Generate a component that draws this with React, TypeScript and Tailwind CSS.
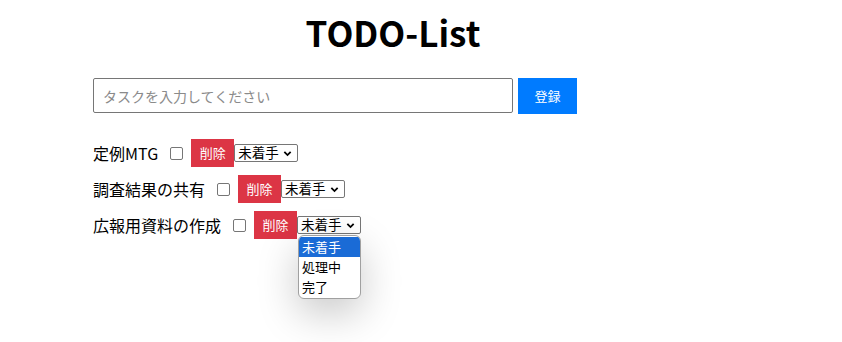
import { useState } from 'react'

type Todo = { id: number; title: string; status: string; done: boolean }

const initialTodos: Todo[] = [
  { id: 1, title: '定例MTG', status: '未着手', done: false },
  { id: 2, title: '調査結果の共有', status: '未着手', done: false },
  { id: 3, title: '広報用資料の作成', status: '未着手', done: false },
]

const statuses = ['未着手', '処理中', '完了']

function StatusSelect({ value, open }: { value: string; open?: boolean }) {
  return (
    <div className="relative">
      <div className="flex h-[18px] items-center gap-[4px] rounded-[2px] border border-[#767676] bg-white pl-[3px] pr-[5px] text-[13.5px] leading-none text-black">
        <span>{value}</span>
        <svg width="9" height="9" viewBox="0 0 10 10" fill="none">
          <path d="M1.5 3.2 5 6.7 8.5 3.2" stroke="#000" strokeWidth="2" />
        </svg>
      </div>
      {open && (
        <div className="absolute left-[1px] top-[19px] z-10 w-[63px] overflow-hidden rounded-[6px] border border-[#a0a0a0] bg-white py-[1px] text-[13px] shadow-[0_14px_40px_rgba(0,0,0,0.22)]">
          {statuses.map((s, i) => (
            <div
              key={s}
              className={
                i === 0
                  ? 'h-[20px] bg-[#1a6bd6] pl-[3px] leading-[20px] text-white'
                  : 'h-[20px] pl-[3px] leading-[20px] text-black'
              }
            >
              {s}
            </div>
          ))}
        </div>
      )}
    </div>
  )
}

export default function App() {
  const [todos] = useState(initialTodos)

  return (
    <div className="h-[342px] w-[842px] bg-white font-['Noto_Sans_CJK_JP',sans-serif] text-black">
      <div className="ml-[93px] w-[600px] pt-[12px]">
        <h1 className="text-center text-[35px] font-bold leading-[40px]">TODO-List</h1>

        {/* Input Section */}
        <div className="mt-[26px] flex gap-[5px]">
          <input
            className="h-[35px] w-[420px] rounded-[2px] border border-[#767676] px-[9px] text-[14px] placeholder:text-[#8a8a8a]"
            placeholder="タスクを入力してください"
          />
          <button className="h-[36px] w-[59px] bg-[#007bff] text-[13px] text-white">登録</button>
        </div>

        {/* List */}
        <ul className="mt-[25px] flex flex-col gap-[8px]">
          {todos.map((t, i) => (
            <li key={t.id} className="flex h-[28px] items-center">
              <span className="text-[16px]">{t.title}</span>
              <span className="ml-[12px] mr-[8px] h-[13px] w-[13px] rounded-[2px] border border-[#767676] bg-white" />
              <button className="h-[28px] w-[43px] bg-[#dc3545] text-[13px] text-white">削除</button>
              <StatusSelect value={t.status} open={i === todos.length - 1} />
            </li>
          ))}
        </ul>
      </div>
    </div>
  )
}
